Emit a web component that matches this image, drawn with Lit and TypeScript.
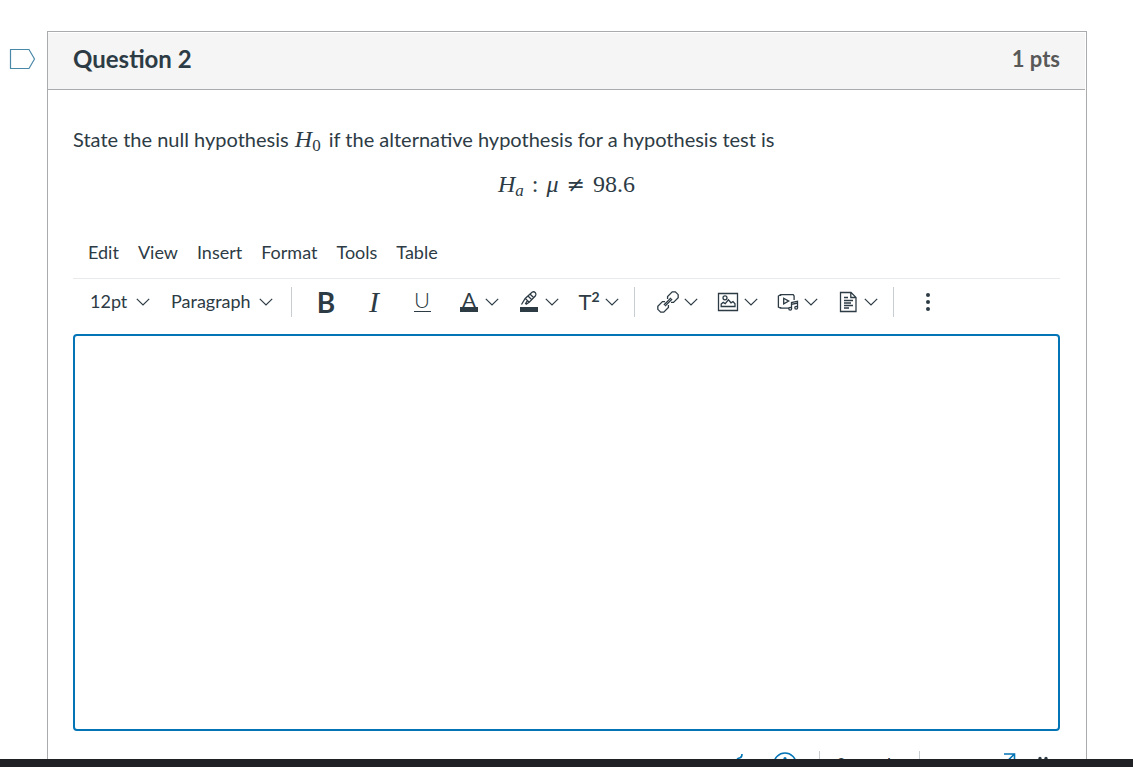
import { LitElement, html, css, svg } from "lit";
import { customElement } from "lit/decorators.js";

const chevron = html`<svg class="chevron" width="14" height="8" viewBox="0 0 14 8" aria-hidden="true">
  <path d="M.8 .8 7 7 13.2 .8" />
</svg>`;

const icons = {
  highlight: svg`
    <path d="M4.500 14.500 8.200 8.400 15 2.300q1.800-1.200 3.300.3 1.400 1.700.2 3.200L12.200 12.300 8.800 14.500M8.200 8.400l4 3.900M11 6l3.800 3.800M13.200 4.200l3.600 3.600M8.300 14.200l1.800-3" />
    <path class="solid" d="M3 17h18v5H3z" />`,
  link: svg`
    <g transform="rotate(-45 12 12)">
      <path d="M10.200 9.600 8.400 7.800H1.800L-.4 10v4l2.200 2.200h6.600l1.800-1.800" />
      <path d="M13.800 14.400l1.800 1.800h6.600l2.200-2.200v-4l-2.200-2.200h-6.600l-1.800 1.800" />
      <path d="M7 11.200h10M7 12.800h10" />
    </g>`,
  image: svg`
    <path d="M2.500 3.500h19v17h-19z" />
    <circle cx="9" cy="7.800" r="2" />
    <path d="M5.200 16.500V14l2-1.600 2 1.200 3.200-3.800 2.600 3 2-1.200 2 2.200v2.700z" />`,
  media: svg`
    <path d="M13 18.200H4.600L2.400 17V6L4.600 4.700h12.600l.9 1.300v4M4.600 4.700v1.200M4.600 18.200V17" />
    <path d="M7.700 8.300v5.600l5-2.800z" />
    <path d="M15.500 18.600v-6l6-1.400v6.400M15.500 14.400l6-1.400" />
    <circle cx="14.200" cy="18.800" r="1.400" /><circle cx="20.200" cy="17.800" r="1.400" />`,
  doc: svg`
    <path d="M4.500 2.500h10.500l5 4.900v14.100H4.500zM14.800 2.500v5H20M8 7.500h4M8 10.500h9M8 13h7M8 15.500h9M8 18h5" />`,
  more: svg`
    <circle class="solid" cx="12" cy="5" r="2" /><circle class="solid" cx="12" cy="12" r="2" /><circle class="solid" cx="12" cy="19" r="2" />`,
  keyboard: svg`
    <path d="M1 11h22v11H1zM12 11V8.500q0-2.200 2.500-2.500 2.500-.3 2.500-4M4 14.500h2m2 0h2m2 0h2m2 0h2M6 18.500h12" />`,
  access: svg`
    <circle cx="12" cy="12" r="11" /><circle class="solid" cx="12" cy="6.500" r="1.600" />
    <path d="M6.500 9.500 12 10.500l5.500-1M12 10.500v4L9 19.500M12 14.500l3 5" />`,
  code: svg`<path d="M7 8 2 12.500 7 17M17 8l5 4.500L17 17M14 8l-4 9" />`,
  expand: svg`<path d="M12 2h10.500v10.500M22.500 2 1.500 22.500M1.500 12v10.500H12" />`,
  drag: svg`
    <circle class="solid" cx="9" cy="6.500" r="1.700" /><circle class="solid" cx="15" cy="6.500" r="1.700" />
    <circle class="solid" cx="9" cy="12" r="1.700" /><circle class="solid" cx="15" cy="12" r="1.700" />
    <circle class="solid" cx="9" cy="17.500" r="1.700" /><circle class="solid" cx="15" cy="17.500" r="1.700" />`,
};

const icon = (name: keyof typeof icons) =>
  html`<svg class="icon" width="24" height="24" viewBox="0 0 24 24" aria-hidden="true">${icons[name]}</svg>`;

@customElement("rich-editor")
export class RichEditor extends LitElement {
  static styles = css`
    :host {
      display: block;
      color: #2d3b45;
    }
    button,
    select {
      margin: 0;
      padding: 0;
      border: 0;
      background: none;
      color: inherit;
      font: inherit;
      cursor: pointer;
    }
    .menu {
      display: flex;
      gap: 19px;
      padding: 0 15px 2px;
      height: 48px;
      align-items: center;
      border-bottom: 1px solid #e8eaec;
      font-size: 18px;
    }
    .toolbar {
      display: flex;
      align-items: center;
      height: 46px;
      margin-bottom: 9px;
      font-size: 18px;
    }
    .group {
      display: flex;
      align-items: center;
      height: 30px;
      padding: 0 8px 0 10px;
      border-right: 1px solid #c7cdd1;
    }
    .group.formats {
      gap: 21px;
      padding: 0 18px 0 17px;
    }
    .group.last {
      border: 0;
    }
    .drop {
      display: flex;
      align-items: center;
      gap: 8px;
    }
    select {
      appearance: none;
      padding-bottom: 2px;
      line-height: 24px;
    }
    .tool {
      display: flex;
      align-items: center;
      justify-content: center;
      width: 48px;
      height: 30px;
    }
    .split {
      display: flex;
      align-items: center;
      gap: 4px;
      width: 60px;
      height: 30px;
      padding-left: 11px;
    }
    svg {
      display: block;
      flex: none;
      overflow: visible;
      fill: none;
      stroke: currentColor;
      stroke-width: 1.3;
    }
    .chevron {
      stroke-width: 1.2;
    }
    .solid {
      fill: currentColor;
      stroke: none;
    }
    .glyph {
      display: block;
      text-align: center;
    }
    .bold {
      font-size: 28px;
      line-height: 28px;
      font-weight: 700;
    }
    .italic {
      font: italic 30px/28px "Liberation Serif", serif;
    }
    .underline {
      width: 17px;
      padding-bottom: 3px;
      font-size: 22px;
      line-height: 16px;
      border-bottom: 1px solid currentColor;
      font-weight: 300;
    }
    .color {
      width: 18px;
      margin: 0 3px;
      font-size: 20px;
      line-height: 15px;
      border-bottom: 5px solid currentColor;
    }
    .super {
      width: 24px;
      font-size: 22px;
      line-height: 22px;
      white-space: nowrap;
    }
    .super sup {
      font-size: 14px;
      line-height: 12px;
      font-weight: 700;
    }
    .area {
      display: block;
      box-sizing: border-box;
      width: 100%;
      height: 397px;
      padding: 12px;
      border: 2px solid #0374b5;
      border-radius: 4px;
      outline: 0;
      resize: none;
      font: 20px/30px Lato, sans-serif;
      color: inherit;
    }
    .status {
      display: flex;
      align-items: center;
      justify-content: flex-end;
      height: 26px;
      padding: 20px 2px 12px 0;
      font-size: 18px;
    }
    .status .tool {
      height: 26px;
    }
    .link {
      color: #0374b5;
    }
    .link svg {
      stroke-width: 1.6;
    }
    .words {
      display: flex;
      align-items: center;
      height: 26px;
      margin: 0 0 0 10px;
      padding: 0 20px 0 16px;
      border: solid #c7cdd1;
      border-width: 0 1px;
    }
    .status .code {
      width: 60px;
    }
    .status .grip {
      width: 30px;
    }
  `;

  render() {
    return html`
      <nav class="menu" aria-label="Editor menu">
        ${["Edit", "View", "Insert", "Format", "Tools", "Table"].map(
          (name) => html`<button type="button">${name}</button>`
        )}
      </nav>
      <div class="toolbar" role="toolbar" aria-label="Formatting">
        <div class="group formats">
          <label class="drop"><select aria-label="Font size"><option>12pt</option></select>${chevron}</label>
          <label class="drop"><select aria-label="Block format"><option>Paragraph</option></select>${chevron}</label>
        </div>
        <div class="group">
          <button class="tool" type="button" aria-label="Bold"><span class="glyph bold">B</span></button>
          <button class="tool" type="button" aria-label="Italic"><span class="glyph italic">I</span></button>
          <button class="tool" type="button" aria-label="Underline"><span class="glyph underline">U</span></button>
          <button class="split" type="button" aria-label="Text color"><span class="glyph color">A</span>${chevron}</button>
          <button class="split" type="button" aria-label="Background color">${icon("highlight")}${chevron}</button>
          <button class="split" type="button" aria-label="Superscript"><span class="glyph super">T<sup>2</sup></span>${chevron}</button>
        </div>
        <div class="group">
          <button class="split" type="button" aria-label="Links">${icon("link")}${chevron}</button>
          <button class="split" type="button" aria-label="Images">${icon("image")}${chevron}</button>
          <button class="split" type="button" aria-label="Media">${icon("media")}${chevron}</button>
          <button class="split" type="button" aria-label="Documents">${icon("doc")}${chevron}</button>
        </div>
        <div class="group last">
          <button class="tool" type="button" aria-label="More">${icon("more")}</button>
        </div>
      </div>
      <textarea class="area" aria-label="Answer"></textarea>
      <div class="status">
        <button class="tool link" type="button" aria-label="Keyboard shortcuts">${icon("keyboard")}</button>
        <button class="tool link" type="button" aria-label="Accessibility checker">${icon("access")}</button>
        <span class="words">0 words</span>
        <button class="tool code link" type="button" aria-label="HTML editor">${icon("code")}</button>
        <button class="tool link" type="button" aria-label="Fullscreen">${icon("expand")}</button>
        <button class="tool grip" type="button" aria-label="Resize">${icon("drag")}</button>
      </div>
    `;
  }
}

@customElement("app-root")
export class AppRoot extends LitElement {
  static styles = css`
    :host {
      display: flex;
      flex-direction: column;
      height: 100vh;
      overflow: hidden;
      background: #fff;
      color: #2d3b45;
      font-family: Lato, sans-serif;
    }
    .page {
      flex: 1;
      min-height: 0;
      overflow: hidden;
      display: grid;
      grid-template-columns: 47px minmax(0, 1fr) 46px;
      align-items: start;
      padding-top: 31px;
    }
    .flag {
      margin: 17px 0 0 9px;
      padding: 0;
      border: 0;
      background: none;
      cursor: pointer;
    }
    .flag svg {
      display: block;
      fill: none;
      stroke: #4a88a8;
      stroke-width: 1.2;
    }
    .card {
      padding: 1px 1px 0 0;
      border: 1px solid #a9abad;
    }
    .head {
      display: flex;
      align-items: center;
      justify-content: space-between;
      height: 52px;
      padding: 0 25px 4px;
      background: #f5f5f5;
      border-bottom: 1px solid #a9abad;
    }
    .title {
      margin: 0;
      font-size: 24px;
      line-height: 30px;
      font-weight: 700;
    }
    .points {
      font-size: 22px;
      line-height: 30px;
      font-weight: 700;
      color: #595959;
    }
    .body {
      padding: 34px 25px 0;
    }
    .prompt {
      margin: 0;
      font-size: 20px;
      line-height: 30px;
    }
    .prompt .math {
      padding: 0 3px 0 1px;
    }
    .formula {
      margin: 17px 0 27px;
      line-height: 30px;
      text-align: center;
    }
    .math {
      font-family: "Liberation Serif", serif;
      font-size: 24px;
      line-height: 24px;
    }
    .math sub {
      font-size: 17px;
      line-height: 0;
      vertical-align: -4px;
    }
    .rel {
      padding: 0 8px;
    }
    .unequal {
      font-family: "DejaVu Serif", serif;
      font-size: 22px;
      line-height: 0;
    }
    .dock {
      flex: none;
      height: 8px;
      background: #202124;
    }
  `;

  render() {
    return html`
      <main class="page">
        <button class="flag" type="button" aria-label="Flag question">
          <svg width="27" height="22" viewBox="0 0 27 22"><path d="M1.500 1.500h18.500l5.500 9.500-5.500 9.500H1.500z" /></svg>
        </button>
        <section class="card">
          <header class="head">
            <h2 class="title">Question 2</h2>
            <span class="points">1 pts</span>
          </header>
          <div class="body">
            <p class="prompt">
              State the null hypothesis <span class="math"><i>H</i><sub>0</sub></span> if the alternative hypothesis for a hypothesis test is
            </p>
            <div class="formula">
              <span class="math"><i>H</i><sub><i>a</i></sub><span class="rel">:</span><i>μ</i><span class="rel unequal">≠</span>98.6</span>
            </div>
            <rich-editor></rich-editor>
          </div>
        </section>
      </main>
      <footer class="dock"></footer>
    `;
  }
}
